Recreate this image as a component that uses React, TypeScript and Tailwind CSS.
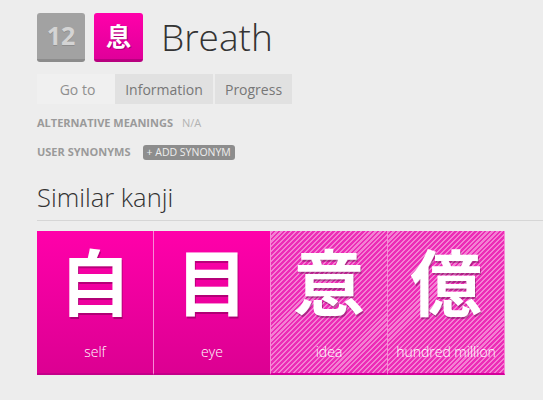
const similar = [
  { kanji: '自', meaning: 'self', locked: false },
  { kanji: '目', meaning: 'eye', locked: false },
  { kanji: '意', meaning: 'idea', locked: true },
  { kanji: '億', meaning: 'hundred million', locked: true },
];

function KanjiCard({ kanji, meaning, locked }: { kanji: string; meaning: string; locked: boolean }) {
  return (
    <li
      className={
        locked
          ? 'flex h-[144px] w-[117px] flex-col items-center border-r border-b-2 border-r-[#f78ad6] border-b-[#d4009a] bg-[image:repeating-linear-gradient(135deg,#f47fd3_0px,#f47fd3_1.5px,#ec2cb6_1.5px,#ec2cb6_3.5px)]'
          : 'flex h-[144px] w-[117px] flex-col items-center border-r border-b-2 border-r-[#f78ad6] border-b-[#c4008a] bg-linear-to-b from-[#ff00aa] to-[#dc0092]'
      }
    >
      <span className="mt-[6px] font-['Noto_Sans_CJK_JP',sans-serif] text-[72px] leading-[84px] font-bold text-white [text-shadow:1px_2px_0_rgba(0,0,0,0.25)]">
        {kanji}
      </span>
      <span className="mt-[21px] text-[14px] leading-5 font-light whitespace-nowrap text-white">{meaning}</span>
    </li>
  );
}

export default function App() {
  return (
    <div className="min-h-[400px] overflow-hidden bg-[#ededed] pt-[13px] pl-[37px] font-['Open_Sans',sans-serif]">
      <header className="flex items-center">
        <span className="flex h-[49px] w-[48px] items-center justify-center rounded-[3px] border-b-[3px] border-[#8c8c8c] bg-[#a2a2a2] text-[25px] font-bold text-[#d4d4d4] [text-shadow:0_1px_0_rgba(0,0,0,0.15)]">
          12
        </span>
        <span className="ml-[9px] flex h-[49px] w-[49px] items-center justify-center rounded-[3px] border-b-[3px] border-[#b8007f] bg-linear-to-b from-[#ff00aa] to-[#e0009a] font-['Noto_Sans_CJK_JP',sans-serif] text-[25px] font-bold text-white [text-shadow:1px_1px_0_rgba(0,0,0,0.3)]">
          息
        </span>
        <h1 className="ml-[18px] -mt-[2px] text-[37px] leading-none font-light text-[#333]">Breath</h1>
      </header>

      <nav className="mt-[12px] flex h-[30px] items-stretch text-[14px] text-[#777]">
        <span className="flex w-[78px] items-center justify-center bg-[#f0f0f0] pl-[3px] text-[#8f8f8f]">Go to</span>
        <span className="flex w-[98px] items-center justify-center bg-[#e1e1e1]">Information</span>
        <span className="ml-[2px] flex w-[77px] items-center justify-center bg-[#e1e1e1]">Progress</span>
      </nav>

      <div className="mt-[11px] flex items-center text-[11px] leading-4">
        <span className="font-bold text-[#9a9a9a]">ALTERNATIVE MEANINGS</span>
        <span className="ml-[9px] text-[#b3b3b3]">N/A</span>
      </div>
      <div className="mt-[13px] flex items-center text-[11px] leading-4">
        <span className="font-bold text-[#9a9a9a]">USER SYNONYMS</span>
        <button className="ml-[12px] h-[15px] rounded-[3px] bg-[#8d8d8d] px-[4px] text-[10.5px] leading-[15px] text-[#eee]">
          + ADD SYNONYM
        </button>
      </div>

      <h2 className="mt-[19px] text-[25.5px] leading-[36px] font-light text-[#333]">Similar kanji</h2>
      <div className="mt-[5px] h-px bg-[#d6d6d6]" />

      <ul className="mt-[10px] flex">
        {similar.map((k) => (
          <KanjiCard key={k.kanji} {...k} />
        ))}
      </ul>
    </div>
  );
}
